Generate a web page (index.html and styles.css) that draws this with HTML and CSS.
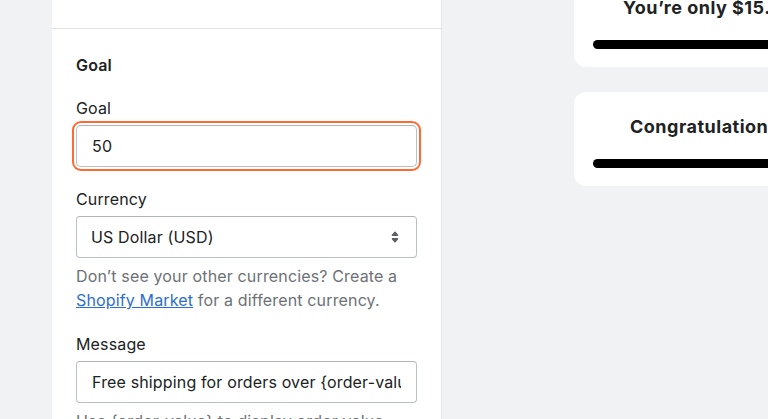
FILE: index.html
```html
<!DOCTYPE html>
<html lang="en">
<head>
<meta charset="utf-8">
<title>Goal settings</title>
<link rel="stylesheet" href="styles.css">
</head>
<body>
<div class="page">
  <div class="panel">
    <div class="panel-top"></div>
    <div class="section">
      <h2 class="section-title">Goal</h2>
      <div class="field">
        <label class="label">Goal</label>
        <div class="input focused">50</div>
      </div>
      <div class="field">
        <label class="label">Currency</label>
        <div class="input select">
          <span>US Dollar (USD)</span>
          <svg class="select-icon" viewBox="0 0 20 20" width="22" height="22"><path d="M7.676 9h4.648c.563 0 .879-.603.53-1.014l-2.323-2.746a.708.708 0 0 0-1.062 0l-2.324 2.746c-.347.411-.032 1.014.531 1.014Zm4.648 2h-4.648c-.563 0-.878.603-.53 1.014l2.323 2.746c.27.32.792.32 1.062 0l2.323-2.746c.349-.411.033-1.014-.53-1.014Z"/></svg>
        </div>
        <p class="help">Don’t see your other currencies? Create a <a href="#" class="link">Shopify Market</a> for a different currency.</p>
      </div>
      <div class="field">
        <label class="label">Message</label>
        <div class="input"><span class="clip">Free shipping for orders over {order-value}</span></div>
        <p class="help">Use {order_value} to display order value</p>
      </div>
    </div>
  </div>
  <div class="preview">
    <div class="card">
      <div class="card-title">You’re only $15.00 away from free shipping</div>
      <div class="bar"></div>
    </div>
    <div class="card">
      <div class="card-title">Congratulations! You’ve got free shipping</div>
      <div class="bar"></div>
    </div>
  </div>
</div>
</body>
</html>
```
FILE: styles.css
```css
html, body {
  margin: 0;
  padding: 0;
  background: #f1f2f4;
  overflow: hidden;
  height: 100%;
}
body {
  font-family: Inter, "Noto Sans", sans-serif;
  font-size: 16px;
  line-height: 24px;
  letter-spacing: 0.15px;
  color: #202223;
}
.page {
  display: flex;
  align-items: flex-start;
  margin-top: -40px;
  padding-left: 52px;
  gap: 133px;
}
.panel {
  width: 389px;
  flex: none;
  background: #fff;
  box-shadow: 1px 0 0 #e4e5e7;
  min-height: 600px;
}
.panel-top {
  height: 68px;
  border-bottom: 1px solid #e1e3e5;
}
.section {
  padding: 24px 24px;
  display: flex;
  flex-direction: column;
  gap: 20px;
}
.section-title {
  margin: 0 0 -1px;
  font-size: 16px;
  line-height: 24px;
  font-weight: 600;
}
.field {
  display: flex;
  flex-direction: column;
}
.label {
  display: block;
  margin-bottom: 5px;
}
.input {
  box-sizing: border-box;
  height: 42px;
  border: 1px solid #babfc3;
  border-top-color: #aeb4b9;
  border-radius: 4px;
  padding: 0 15px;
  display: flex;
  align-items: center;
  background: #fff;
  overflow: hidden;
  white-space: nowrap;
}
.clip {
  overflow: hidden;
  display: block;
  width: 100%;
}
.focused {
  box-shadow: 0 0 0 2px #fff, 0 0 0 4px #ff6a33;
  border-radius: 5px;
}
.select {
  justify-content: space-between;
  padding-left: 14px;
  padding-right: 10px;
}
.select-icon {
  fill: #5c5f62;
}
.help {
  margin: 6px 0 0;
  color: #6d7175;
}
.link {
  color: #2c6ecb;
  text-decoration: underline;
}
.preview {
  width: 478px;
  flex: none;
  display: flex;
  flex-direction: column;
  gap: 25px;
  padding-top: 13px;
}
.card {
  background: #fff;
  border-radius: 12px;
  padding: 23px 19px 18px 19px;
}
.card-title {
  padding-left: 30px;
  font-size: 18px;
  font-weight: 700;
  line-height: 24px;
  letter-spacing: 0.5px;
  color: #202223;
  white-space: nowrap;
  margin-bottom: 20px;
}
.card + .card .card-title {
  padding-left: 37px;
}
.bar {
  height: 9px;
  border-radius: 5px;
  background: #000;
}
```
